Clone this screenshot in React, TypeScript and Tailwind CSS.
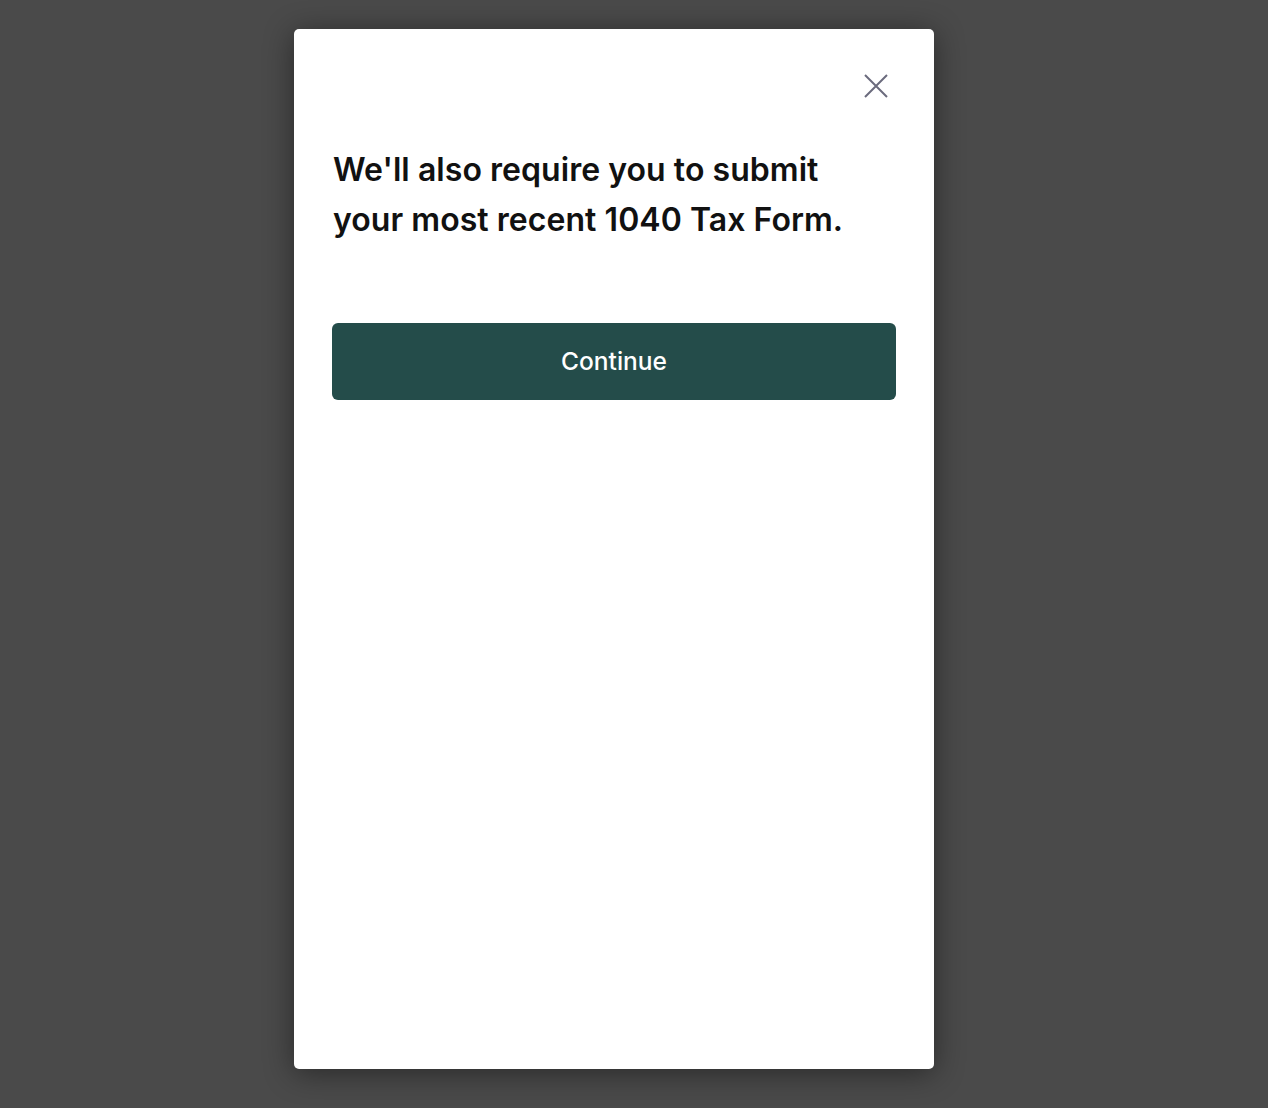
import React from 'react';

export default function App() {
  return (
    <div className="min-h-[1108px] w-full bg-[#4a4a4a] flex justify-center pt-[29px] pr-[40px]" style={{ fontFamily: 'Inter, "Liberation Sans", sans-serif' }}>
      <div className="w-[640px] h-[1040px] bg-white rounded-[5px] shadow-[0_4px_30px_rgba(0,0,0,0.45)] px-[38px] pt-[37px]">
        <div className="flex justify-end">
          <button className="w-10 h-10 flex items-center justify-center" aria-label="Close">
            <svg width="24" height="24" viewBox="0 0 24 24" fill="none" stroke="#6b6b7d" strokeWidth="2">
              <path d="M1 1L23 23M23 1L1 23" />
            </svg>
          </button>
        </div>
        <h1 className="mt-[39px] pl-px text-[32px] leading-[50px] font-semibold text-[#111111] tracking-[0.05px]">
          We'll also require you to submit
          <br />
          your most recent 1040 Tax Form.
        </h1>
        <button className="mt-[78px] w-full h-[77px] rounded-[6px] bg-[#244c4a] text-white text-[24.5px] font-medium">
          Continue
        </button>
      </div>
    </div>
  );
}
